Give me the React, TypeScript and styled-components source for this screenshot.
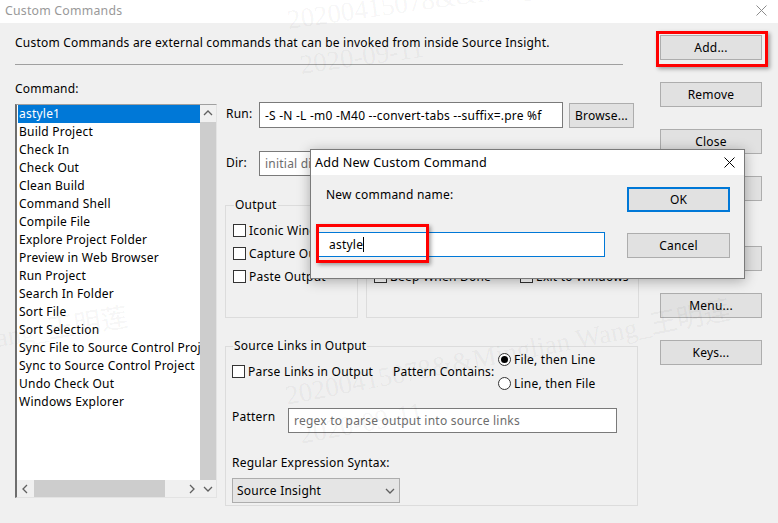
import styled, { createGlobalStyle } from "styled-components";

const UI_FONT = `"Noto Sans", "Open Sans", "Noto Sans CJK SC", sans-serif`;

const GlobalStyle = createGlobalStyle`
  html, body {
    margin: 0;
    padding: 0;
    background: #f0f0f0;
  }
  body {
    font-family: ${UI_FONT};
    font-size: 12px;
    letter-spacing: 0.22px;
    color: #000;
  }
`;

const commands = [
  "astyle1",
  "Build Project",
  "Check In",
  "Check Out",
  "Clean Build",
  "Command Shell",
  "Compile File",
  "Explore Project Folder",
  "Preview in Web Browser",
  "Run Project",
  "Search In Folder",
  "Sort File",
  "Sort Selection",
  "Sync File to Source Control Project",
  "Sync to Source Control Project",
  "Undo Check Out",
  "Windows Explorer",
];

type Dir = "up" | "down" | "left" | "right";

const chevronPoints: Record<Dir, string> = {
  up: "1,6 5,2 9,6",
  down: "1,3 5,7 9,3",
  left: "6,1 2,5 6,9",
  right: "3,1 7,5 3,9",
};

const Chevron = ({ dir }: { dir: Dir }) => (
  <svg width="10" height="10" viewBox="0 0 10 10">
    <polyline points={chevronPoints[dir]} fill="none" stroke="#606060" strokeWidth="1.3" />
  </svg>
);

const CloseIcon = ({ color }: { color: string }) => (
  <svg width="11" height="11" viewBox="0 0 11 11">
    <path d="M0.5 0.5 L10.5 10.5 M10.5 0.5 L0.5 10.5" stroke={color} strokeWidth="1" />
  </svg>
);

const App = () => {
  return (
    <>
      <GlobalStyle />
      <Window>
        <TitleBar>
          <WindowTitle>Custom Commands</WindowTitle>
          <CloseIcon color="#8c8c8c" />
        </TitleBar>

        <Body>
          <MainCol>
            <Description>
              Custom Commands are external commands that can be invoked from inside Source Insight.
            </Description>
            <Separator />
            <Label>Command:</Label>

            <ContentRow>
              <ListBox>
                <Items>
                  {commands.map((c, i) => (
                    <Item key={c} $selected={i === 0}>
                      {c}
                    </Item>
                  ))}
                </Items>
                <VScroll>
                  <ArrowCell>
                    <Chevron dir="up" />
                  </ArrowCell>
                  <VThumb />
                  <ArrowCell>
                    <Chevron dir="down" />
                  </ArrowCell>
                </VScroll>
                <HScroll>
                  <ArrowCell>
                    <Chevron dir="left" />
                  </ArrowCell>
                  <HThumb />
                  <ArrowCell>
                    <Chevron dir="right" />
                  </ArrowCell>
                </HScroll>
              </ListBox>

              <Panel>
                <FieldRow>
                  <FieldLabel>Run:</FieldLabel>
                  <TextField $width={304} $height={26}>
                    -S -N -L -m0 -M40 --convert-tabs --suffix=.pre %f
                  </TextField>
                  <Button $width={65}>Browse...</Button>
                </FieldRow>
                <FieldRow $gap={23}>
                  <FieldLabel>Dir:</FieldLabel>
                  <TextField $width={304} $height={25} $muted>
                    initial directory
                  </TextField>
                </FieldRow>

                <GroupRow>
                  <Group $width={133}>
                    <Legend>Output</Legend>
                    <CheckRow>
                      <CheckBox />
                      Iconic Window
                    </CheckRow>
                    <CheckRow>
                      <CheckBox />
                      Capture Output
                    </CheckRow>
                    <CheckRow>
                      <CheckBox />
                      Paste Output
                    </CheckRow>
                  </Group>
                  <Group $width={273}>
                    <Legend>Run</Legend>
                    <OptionsGrid>
                      <CheckRow>
                        <CheckBox />
                        Save Files First
                      </CheckRow>
                      <CheckRow>
                        <CheckBox />
                        Wait Until Done
                      </CheckRow>
                      <CheckRow>
                        <CheckBox />
                        Pause When Done
                      </CheckRow>
                      <CheckRow>
                        <CheckBox />
                        Quote Names
                      </CheckRow>
                      <CheckRow>
                        <CheckBox />
                        Beep When Done
                      </CheckRow>
                      <CheckRow>
                        <CheckBox />
                        Exit to Windows
                      </CheckRow>
                    </OptionsGrid>
                  </Group>
                </GroupRow>

                <LinksGroup>
                  <Legend>Source Links in Output</Legend>
                  <LinksTop>
                    <ParseCell>
                      <CheckBox />
                      Parse Links in Output
                    </ParseCell>
                    <ContainsLabel>Pattern Contains:</ContainsLabel>
                    <Radios>
                      <RadioRow>
                        <Radio $checked />
                        File, then Line
                      </RadioRow>
                      <RadioRow>
                        <Radio />
                        Line, then File
                      </RadioRow>
                    </Radios>
                  </LinksTop>
                  <PatternRow>
                    <PatternLabel>Pattern</PatternLabel>
                    <TextField $width={329} $height={25} $muted>
                      regex to parse output into source links
                    </TextField>
                  </PatternRow>
                  <SyntaxLabel>Regular Expression Syntax:</SyntaxLabel>
                  <Select>
                    Source Insight
                    <Chevron dir="down" />
                  </Select>
                </LinksGroup>
              </Panel>
            </ContentRow>
          </MainCol>

          <ButtonCol>
            <Marked>
              <Button $width={102}>Add...</Button>
            </Marked>
            <Button $width={102}>Remove</Button>
            <Button $width={102}>Close</Button>
            <Button $width={102}>Run</Button>
            <Button $width={102} $spaced>
              Help
            </Button>
            <Button $width={102}>Menu...</Button>
            <Button $width={102}>Keys...</Button>
          </ButtonCol>
        </Body>

        <Dialog>
          <DialogTitleBar>
            <DialogTitle>Add New Custom Command</DialogTitle>
            <CloseIcon color="#000" />
          </DialogTitleBar>
          <DialogBody>
            <DialogMain>
              <DialogLabel>New command name:</DialogLabel>
              <NameField>
                astyle
                <Caret />
              </NameField>
            </DialogMain>
            <DialogButtons>
              <DialogButton $default>OK</DialogButton>
              <DialogButton>Cancel</DialogButton>
            </DialogButtons>
          </DialogBody>
          <NameHighlight />
        </Dialog>

        <Watermark $x={287} $y={-2} $rot={-8}>
          20200415078&amp;&amp;Minglian Wang_王明莲
        </Watermark>
        <Watermark $x={300} $y={50} $rot={-8}>
          2020-09-11
        </Watermark>
        <Watermark $x={-320} $y={366} $rot={-9}>
          20200415078&amp;&amp;Minglian Wang_王明莲
        </Watermark>
        <Watermark $x={285} $y={374} $rot={-11}>
          20200415078&amp;&amp;Minglian Wang_王明莲
        </Watermark>
        <Watermark $x={300} $y={420} $rot={-11}>
          2020-09-11
        </Watermark>
      </Window>
    </>
  );
};

const Window = styled.div`
  position: relative;
  width: 778px;
  height: 523px;
  background: #f0f0f0;
  overflow: hidden;
`;

const TitleBar = styled.div`
  height: 23px;
  background: #fff;
  display: flex;
  align-items: center;
  justify-content: space-between;
  padding: 0 11px 2px 5px;
  box-sizing: border-box;
`;

const WindowTitle = styled.span`
  color: #999;
  font-size: 12.3px;
`;

const Body = styled.div`
  display: flex;
  padding-left: 15px;
`;

const MainCol = styled.div`
  width: 645px;
  display: flex;
  flex-direction: column;
`;

const Description = styled.div`
  margin-top: 11px;
  line-height: 18px;
  white-space: nowrap;
`;

const Separator = styled.div`
  width: 608px;
  height: 1px;
  margin-top: 12px;
  background: #a0a0a0;
`;

const Label = styled.div`
  margin-top: 15px;
  line-height: 18px;
`;

const ContentRow = styled.div`
  display: flex;
  align-items: flex-start;
  margin-top: 4px;
`;

const ListBox = styled.div`
  margin-top: 2px;
  width: 202px;
  height: 394px;
  box-sizing: border-box;
  background: #fff;
  border-top: 1px solid #a0a0a0;
  border-left: 2px solid #6e6e6e;
  border-right: 1px solid #e3e3e3;
  border-bottom: 1px solid #e3e3e3;
  display: grid;
  grid-template-columns: 1fr 16px;
  grid-template-rows: 1fr 17px;
`;

const Items = styled.div`
  grid-column: 1;
  grid-row: 1;
  overflow: hidden;
  padding-left: 1px;
`;

const Item = styled.div<{ $selected?: boolean }>`
  height: 18px;
  line-height: 18px;
  padding-left: 1px;
  white-space: nowrap;
  overflow: hidden;
  background: ${(p) => (p.$selected ? "#0078d7" : "transparent")};
  color: ${(p) => (p.$selected ? "#fff" : "#000")};
`;

const VScroll = styled.div`
  grid-column: 2;
  grid-row: 1 / span 2;
  display: flex;
  flex-direction: column;
  background: #f0f0f0;
`;

const ArrowCell = styled.div`
  width: 16px;
  height: 17px;
  display: flex;
  align-items: center;
  justify-content: center;
  flex-shrink: 0;
`;

const VThumb = styled.div`
  flex: 1;
  background: #cdcdcd;
`;

const HScroll = styled.div`
  grid-column: 1;
  grid-row: 2;
  display: flex;
  align-items: center;
  background: #f0f0f0;
  padding-left: 1px;
`;

const HThumb = styled.div`
  width: 131px;
  height: 17px;
  background: #cdcdcd;
  margin-right: auto;
`;

const Panel = styled.div`
  margin-left: 9px;
  display: flex;
  flex-direction: column;
`;

const FieldRow = styled.div<{ $gap?: number }>`
  display: flex;
  align-items: center;
  gap: 6px;
  margin-top: ${(p) => p.$gap ?? 0}px;
`;

const FieldLabel = styled.span`
  width: 27px;
  line-height: 18px;
  align-self: flex-start;
  margin-top: 3px;
`;

const TextField = styled.div<{ $width: number; $height: number; $muted?: boolean }>`
  width: ${(p) => p.$width}px;
  height: ${(p) => p.$height}px;
  box-sizing: border-box;
  border: 1px solid #7a7a7a;
  background: #fff;
  display: flex;
  align-items: center;
  padding-left: 5px;
  white-space: nowrap;
  overflow: hidden;
  color: ${(p) => (p.$muted ? "#6d6d6d" : "#000")};
`;

const Button = styled.div<{ $width: number; $spaced?: boolean }>`
  width: ${(p) => p.$width}px;
  height: 25px;
  box-sizing: border-box;
  background: #e1e1e1;
  border: 1px solid #adadad;
  display: flex;
  align-items: center;
  justify-content: center;
  margin-top: ${(p) => (p.$spaced ? 23 : 0)}px;
`;

const GroupRow = styled.div`
  display: flex;
  gap: 8px;
  margin-top: 21px;
  margin-left: -1px;
`;

const Group = styled.fieldset<{ $width: number }>`
  width: ${(p) => p.$width}px;
  height: 121px;
  box-sizing: border-box;
  margin: 0;
  padding: 0 0 0 7px;
  border: 1px solid #dcdcdc;
  min-width: 0;
`;

const Legend = styled.legend`
  padding: 0 1px;
  margin-left: 1px;
  line-height: 16px;
  font-size: 12px;
`;

const CheckRow = styled.div`
  display: flex;
  align-items: center;
  gap: 3px;
  height: 23px;
  white-space: nowrap;
  &:first-of-type {
    margin-top: 6px;
  }
`;

const OptionsGrid = styled.div`
  display: grid;
  grid-template-columns: 146px 1fr;
  margin-top: 6px;
  & > ${CheckRow} {
    margin-top: 0;
  }
`;

const CheckBox = styled.span`
  width: 13px;
  height: 13px;
  box-sizing: border-box;
  border: 1px solid #333;
  background: #fff;
  flex-shrink: 0;
`;

const LinksGroup = styled.fieldset`
  margin: 20px 0 0 -1px;
  width: 413px;
  height: 168px;
  box-sizing: border-box;
  padding: 0 0 0 6px;
  border: 1px solid #dcdcdc;
  min-width: 0;
`;

const LinksTop = styled.div`
  display: flex;
  align-items: center;
  margin-top: -7px;
`;

const ParseCell = styled.div`
  width: 161px;
  display: flex;
  align-items: center;
  gap: 3px;
  white-space: nowrap;
`;

const ContainsLabel = styled.span`
  width: 105px;
  white-space: nowrap;
`;

const Radios = styled.div`
  display: flex;
  flex-direction: column;
`;

const RadioRow = styled.div`
  display: flex;
  align-items: center;
  gap: 3px;
  height: 24px;
  white-space: nowrap;
`;

const Radio = styled.span<{ $checked?: boolean }>`
  width: 13px;
  height: 13px;
  box-sizing: border-box;
  border: 1px solid #333;
  border-radius: 50%;
  background: #fff;
  display: flex;
  align-items: center;
  justify-content: center;
  &::after {
    content: "";
    width: 7px;
    height: 7px;
    border-radius: 50%;
    background: ${(p) => (p.$checked ? "#000" : "transparent")};
  }
`;

const PatternRow = styled.div`
  display: flex;
  align-items: flex-start;
  margin-top: 13px;
`;

const PatternLabel = styled.span`
  width: 56px;
  line-height: 18px;
`;

const SyntaxLabel = styled.div`
  margin-top: 21px;
  line-height: 18px;
`;

const Select = styled.div`
  margin-top: 6px;
  width: 168px;
  height: 25px;
  box-sizing: border-box;
  border: 1px solid #adadad;
  background: #e5e5e5;
  display: flex;
  align-items: center;
  justify-content: space-between;
  padding: 0 4px 0 4px;
`;

const ButtonCol = styled.div`
  width: 102px;
  display: flex;
  flex-direction: column;
  gap: 22px;
  padding-top: 12px;
`;

const Marked = styled.div`
  position: relative;
  &::after {
    content: "";
    position: absolute;
    left: -4px;
    top: -4px;
    right: -6px;
    bottom: -7px;
    border: 3px solid #ff0000;
    box-shadow: 2px 2px 4px rgba(0, 0, 0, 0.35);
  }
`;

const Dialog = styled.div`
  position: absolute;
  left: 310px;
  top: 149px;
  width: 435px;
  height: 130px;
  box-sizing: border-box;
  border: 1px solid #7a7a7a;
  background: #f0f0f0;
  box-shadow: 0 2px 12px rgba(0, 0, 0, 0.3);
`;

const DialogTitleBar = styled.div`
  height: 25px;
  background: #fff;
  display: flex;
  align-items: center;
  justify-content: space-between;
  padding: 0 9px 0 4px;
`;

const DialogTitle = styled.span`
  font-size: 12.6px;
`;

const DialogBody = styled.div`
  display: flex;
  padding-left: 7px;
`;

const DialogMain = styled.div`
  width: 287px;
  display: flex;
  flex-direction: column;
`;

const DialogLabel = styled.div`
  margin: 11px 0 0 8px;
  line-height: 18px;
`;

const NameField = styled.div`
  margin-top: 28px;
  height: 25px;
  box-sizing: border-box;
  border: 1px solid #0078d7;
  background: #fff;
  display: flex;
  align-items: center;
  padding-left: 10px;
`;

const Caret = styled.span`
  width: 1px;
  height: 15px;
  background: #000;
`;

const DialogButtons = styled.div`
  margin-left: 22px;
  display: flex;
  flex-direction: column;
  gap: 21px;
  padding-top: 12px;
`;

const DialogButton = styled.div<{ $default?: boolean }>`
  width: 103px;
  height: 25px;
  box-sizing: border-box;
  background: #e1e1e1;
  border: ${(p) => (p.$default ? "2px solid #0078d7" : "1px solid #adadad")};
  display: flex;
  align-items: center;
  justify-content: center;
`;

const NameHighlight = styled.div`
  position: absolute;
  left: 5px;
  top: 74px;
  width: 113px;
  height: 39px;
  box-sizing: border-box;
  border: 3px solid #ff0000;
  box-shadow: 2px 2px 4px rgba(0, 0, 0, 0.35);
`;

const Watermark = styled.div<{ $x: number; $y: number; $rot: number }>`
  position: absolute;
  left: ${(p) => p.$x}px;
  top: ${(p) => p.$y}px;
  transform: rotate(${(p) => p.$rot}deg);
  transform-origin: left center;
  font-family: "Liberation Serif", "Noto Sans CJK SC", serif;
  font-size: 27px;
  letter-spacing: 0;
  color: rgba(0, 0, 0, 0.05);
  white-space: nowrap;
  pointer-events: none;
`;

export default App;
